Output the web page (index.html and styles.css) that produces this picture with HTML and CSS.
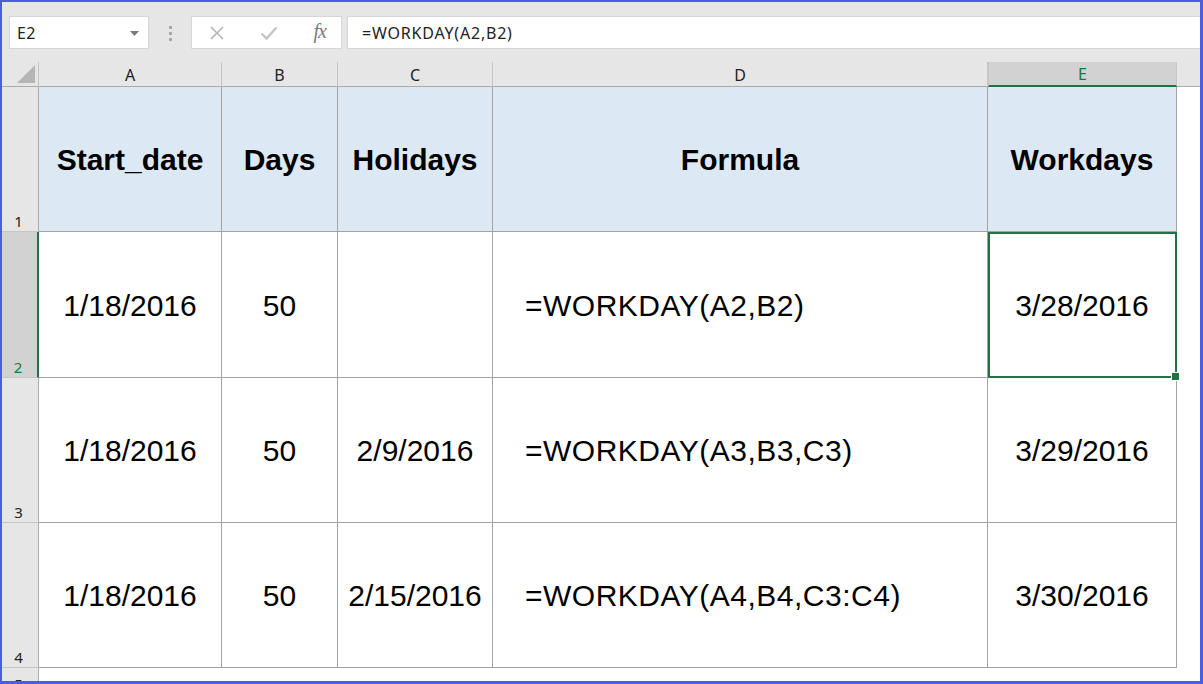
FILE: index.html
```html
<!DOCTYPE html>
<html>
<head>
<meta charset="utf-8">
<link rel="stylesheet" href="styles.css">
</head>
<body>
<div class="frame">
  <div class="fbar">
    <div class="namebox">
      <span class="name">E2</span>
      <svg class="caret" width="9" height="5" viewBox="0 0 9 5"><path d="M0 0H9L4.5 5Z" fill="#7a7a7a"/></svg>
    </div>
    <div class="grip"><i></i><i></i><i></i></div>
    <div class="fnbox">
      <svg class="ico" width="16" height="16" viewBox="0 0 16 16"><path d="M2 2L14 14M14 2L2 14" stroke="#b4b4b4" stroke-width="1.6" fill="none"/></svg>
      <svg class="ico" width="18" height="16" viewBox="0 0 18 16"><path d="M1.5 8.5L6.5 13.5L16.5 2.5" stroke="#c4c4c4" stroke-width="2.4" fill="none"/></svg>
      <span class="fx">fx</span>
    </div>
    <div class="input">=WORKDAY(A2,B2)</div>
  </div>

  <div class="sheet">
    <div class="corner"><svg width="18" height="18" viewBox="0 0 18 18"><path d="M18 0V18H0Z" fill="#b5b5b5"/></svg></div>
    <div class="colh">A</div>
    <div class="colh">B</div>
    <div class="colh">C</div>
    <div class="colh">D</div>
    <div class="colh colsel">E</div>
    <div class="colh rest"></div>

    <div class="rowh">1</div>
    <div class="cell head">Start_date</div>
    <div class="cell head">Days</div>
    <div class="cell head">Holidays</div>
    <div class="cell head">Formula</div>
    <div class="cell head">Workdays</div>
    <div class="blank"></div>

    <div class="rowh rowsel">2</div>
    <div class="cell">1/18/2016</div>
    <div class="cell">50</div>
    <div class="cell"></div>
    <div class="cell formula">=WORKDAY(A2,B2)</div>
    <div class="cell active">3/28/2016</div>
    <div class="blank"></div>

    <div class="rowh">3</div>
    <div class="cell">1/18/2016</div>
    <div class="cell">50</div>
    <div class="cell">2/9/2016</div>
    <div class="cell formula">=WORKDAY(A3,B3,C3)</div>
    <div class="cell">3/29/2016</div>
    <div class="blank"></div>

    <div class="rowh">4</div>
    <div class="cell">1/18/2016</div>
    <div class="cell">50</div>
    <div class="cell">2/15/2016</div>
    <div class="cell formula">=WORKDAY(A4,B4,C3:C4)</div>
    <div class="cell">3/30/2016</div>
    <div class="blank"></div>

    <div class="rowh last">5</div>
    <div class="blank"></div>
    <div class="blank"></div>
    <div class="blank"></div>
    <div class="blank"></div>
    <div class="blank"></div>
    <div class="blank"></div>
  </div>
</div>
</body>
</html>
```

FILE: styles.css
```css
* { box-sizing: border-box; }
html, body { margin: 0; padding: 0; background: #ffffff; }

.frame {
  width: 1203px;
  height: 684px;
  border-style: solid;
  border-color: #4a5de4;
  border-width: 2px 3px 3px 2px;
  background: #e6e6e6;
  overflow: hidden;
  display: flex;
  flex-direction: column;
}

/* formula bar */
.fbar {
  height: 60px;
  flex: none;
  display: flex;
  padding: 14px 0 12px 7px;
  font-family: "Noto Sans", "Open Sans", sans-serif;
}
.namebox {
  width: 140px;
  height: 33px;
  background: #fff;
  border: 1px solid #d6d6d6;
  display: flex;
  align-items: center;
  justify-content: space-between;
  padding: 0 9px 0 7px;
}
.name { font-size: 16px; color: #222; letter-spacing: 0.3px; }
.caret { margin-top: 1px; }
.grip {
  width: 42px;
  display: flex;
  flex-direction: column;
  align-items: center;
  justify-content: center;
  gap: 3px;
}
.grip i {
  display: block;
  width: 3px;
  height: 3px;
  background: #a3a3a3;
  border-radius: 1px;
}
.fnbox {
  width: 151px;
  height: 33px;
  background: #fff;
  border: 1px solid #d6d6d6;
  display: flex;
  align-items: center;
  padding: 0 15px 0 17px;
  justify-content: space-between;
}
.fx {
  font-family: "Liberation Serif", "DejaVu Serif", serif;
  font-style: italic;
  font-size: 20px;
  color: #7a7a7a;
  letter-spacing: -1px;
  margin-top: -3px;
}
.input {
  flex: 1;
  margin-left: 5px;
  height: 33px;
  background: #fff;
  border: 1px solid #d6d6d6;
  border-right: none;
  padding-left: 14px;
  display: flex;
  align-items: center;
  font-size: 16px;
  letter-spacing: 0.8px;
  color: #222;
}

/* sheet grid */
.sheet {
  flex: 1;
  display: grid;
  grid-template-columns: 37px 183px 116px 155px 495px 189px 1fr;
  grid-template-rows: 25px 145px 146px 145px 145px 30px;
  background: #fff;
  overflow: hidden;
}
.corner {
  background: #e6e6e6;
  border-right: 1px solid #c6c6c6;
  border-bottom: 1px solid #ababab;
  display: flex;
  align-items: flex-end;
  justify-content: flex-end;
  padding: 0 3px 3px 0;
}
.colh {
  background: #e6e6e6;
  border-right: 1px solid #c6c6c6;
  border-bottom: 1px solid #ababab;
  display: flex;
  align-items: center;
  justify-content: center;
  font-family: "Noto Sans", "Open Sans", sans-serif;
  font-size: 16px;
  color: #222;
  padding-top: 1px;
}
.colh.colsel {
  background: #d2d2d2;
  color: #217346;
  border-bottom: 2px solid #217346;
  border-left: 1px solid #c6c6c6;
}
.colh.rest { border-right: none; }

.rowh {
  background: #e6e6e6;
  border-right: 1px solid #ababab;
  border-bottom: 1px solid #c6c6c6;
  display: flex;
  align-items: flex-end;
  justify-content: center;
  font-family: "Noto Sans", "Open Sans", sans-serif;
  font-size: 15px;
  line-height: 16px;
  color: #222;
  padding-bottom: 2px;
  padding-right: 3px;
}
.rowh.rowsel {
  background: #d2d2d2;
  color: #217346;
  border-right: 2px solid #217346;
}
.rowh.last {
  align-items: flex-start;
  padding-top: 8px;
}

.cell {
  border-right: 1px solid #a3a3a3;
  border-bottom: 1px solid #a3a3a3;
  display: flex;
  align-items: center;
  justify-content: center;
  font-family: "Liberation Sans", Arial, sans-serif;
  font-size: 30px;
  color: #000;
  padding-top: 2px;
}
.cell.head {
  background: #dde8f5;
  font-weight: bold;
}
.cell.formula {
  justify-content: flex-start;
  padding-left: 32px;
  letter-spacing: 0.5px;
}
.cell.active {
  position: relative;
  outline: 2px solid #217346;
  outline-offset: -2px;
}
.cell.active::after {
  content: "";
  position: absolute;
  right: -4px;
  bottom: -4px;
  width: 7px;
  height: 7px;
  background: #217346;
  border: 1px solid #fff;
  z-index: 2;
}
.blank { background: #fff; }
```
